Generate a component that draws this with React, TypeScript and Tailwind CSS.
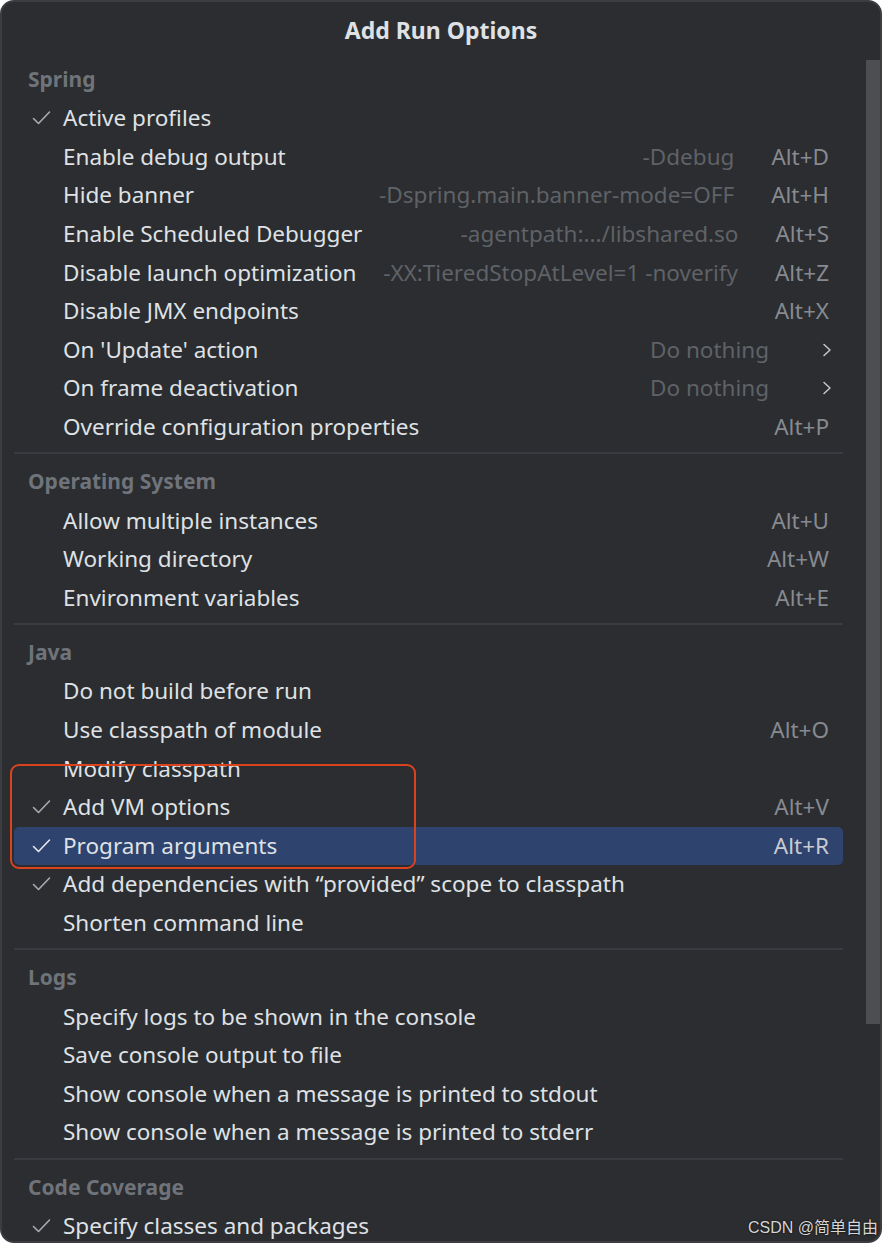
import React from 'react';

type Item = {
  label: string;
  checked?: boolean;
  hint?: string;
  shortcut?: string;
  submenu?: boolean;
  selected?: boolean;
};

type Section = { title: string; items: Item[] };

const sections: Section[] = [
  {
    title: 'Spring',
    items: [
      { label: 'Active profiles', checked: true },
      { label: 'Enable debug output', hint: '-Ddebug', shortcut: 'Alt+D' },
      { label: 'Hide banner', hint: '-Dspring.main.banner-mode=OFF', shortcut: 'Alt+H' },
      { label: 'Enable Scheduled Debugger', hint: '-agentpath:.../libshared.so', shortcut: 'Alt+S' },
      { label: 'Disable launch optimization', hint: '-XX:TieredStopAtLevel=1 -noverify', shortcut: 'Alt+Z' },
      { label: 'Disable JMX endpoints', shortcut: 'Alt+X' },
      { label: "On 'Update' action", hint: 'Do nothing', submenu: true },
      { label: 'On frame deactivation', hint: 'Do nothing', submenu: true },
      { label: 'Override configuration properties', shortcut: 'Alt+P' },
    ],
  },
  {
    title: 'Operating System',
    items: [
      { label: 'Allow multiple instances', shortcut: 'Alt+U' },
      { label: 'Working directory', shortcut: 'Alt+W' },
      { label: 'Environment variables', shortcut: 'Alt+E' },
    ],
  },
  {
    title: 'Java',
    items: [
      { label: 'Do not build before run' },
      { label: 'Use classpath of module', shortcut: 'Alt+O' },
      { label: 'Modify classpath' },
      { label: 'Add VM options', checked: true, shortcut: 'Alt+V' },
      { label: 'Program arguments', checked: true, shortcut: 'Alt+R', selected: true },
      { label: 'Add dependencies with \u201cprovided\u201d scope to classpath', checked: true },
      { label: 'Shorten command line' },
    ],
  },
  {
    title: 'Logs',
    items: [
      { label: 'Specify logs to be shown in the console' },
      { label: 'Save console output to file' },
      { label: 'Show console when a message is printed to stdout' },
      { label: 'Show console when a message is printed to stderr' },
    ],
  },
  {
    title: 'Code Coverage',
    items: [{ label: 'Specify classes and packages', checked: true }],
  },
];

function Check({ light }: { light?: boolean }) {
  return (
    <svg width="20" height="16" viewBox="0 0 20 16" fill="none">
      <path
        d="M2.5 8.5 L7.5 13.5 L18.5 2"
        stroke={light ? '#e6e8ec' : '#a8abb0'}
        strokeWidth="1.6"
        strokeLinecap="round"
        strokeLinejoin="round"
      />
    </svg>
  );
}

function Chevron() {
  return (
    <svg width="10" height="14" viewBox="0 0 10 14" fill="none">
      <path d="M2 1.5 L8 7 L2 12.5" stroke="#c4c7cc" strokeWidth="1.5" strokeLinecap="round" strokeLinejoin="round" />
    </svg>
  );
}

function Row({ item }: { item: Item }) {
  return (
    <div
      className={`ml-[12px] mr-[37px] flex h-[38.6px] items-center rounded-[5px] pl-[17px] pr-[14px] ${
        item.selected ? 'bg-[#2e436e]' : ''
      }`}
    >
      <div className="flex w-[32px] shrink-0 items-center">{item.checked && <Check light={item.selected} />}</div>
      <span className="whitespace-nowrap text-[#dfe1e5]">{item.label}</span>
      <div className="flex-1" />
      {item.hint && (
        <span className={`whitespace-nowrap text-[#5f6267] ${item.submenu ? 'mr-[52px]' : 'mr-[37px]'}`}>
          {item.hint}
        </span>
      )}
      {item.submenu ? (
        <div className="mr-[-4px] flex w-[12px] justify-center">
          <Chevron />
        </div>
      ) : (
        item.shortcut && (
          <span className={`whitespace-nowrap ${item.selected ? 'text-[#c8cbd1]' : 'text-[#878a90]'}`}>
            {item.shortcut}
          </span>
        )
      )}
    </div>
  );
}

export default function App() {
  return (
    <div className="h-[1245px] w-[882px] bg-white">
      <div
        className="relative h-[1243px] w-[882px] overflow-hidden rounded-[14px] border-2 border-[#3b3d41] bg-[#2b2d30] text-[22.5px] leading-[30px]"
        style={{ fontFamily: '"Noto Sans", "Open Sans", sans-serif' }}
      >
        <div className="flex h-[56px] items-center justify-center text-[23px] font-bold text-[#dfe1e5]">
          Add Run Options
        </div>
        <div className="pt-[1px]">
          {sections.map((s, i) => (
            <div key={s.title}>
              {i > 0 && <div className="ml-[12px] mb-[7px] mt-[6px] h-[2px] w-[829px] bg-[#393b40]" />}
              <div className="flex h-[40px] items-center pl-[26px] text-[21px] font-bold text-[#6f737a]">{s.title}</div>
              {s.items.map((it) => (
                <Row key={it.label} item={it} />
              ))}
            </div>
          ))}
        </div>

        {/* scrollbar thumb */}
        <div className="absolute right-0 top-[58px] h-[964px] w-[14px] bg-[#4c4e52]" />

        {/* annotation box */}
        <div className="absolute left-[8px] top-[762px] h-[105px] w-[406px] rounded-[9px] border-2 border-[#d9441f]" />

        {/* watermark */}
        <div
          className="absolute bottom-[3px] right-[2px] text-[16px] leading-[20px] text-[#d6d6d6]"
          style={{ fontFamily: '"Liberation Sans", "Noto Sans CJK SC", sans-serif', textShadow: '0 0 2px #000' }}
        >
          CSDN @简单自由
        </div>
      </div>
    </div>
  );
}
